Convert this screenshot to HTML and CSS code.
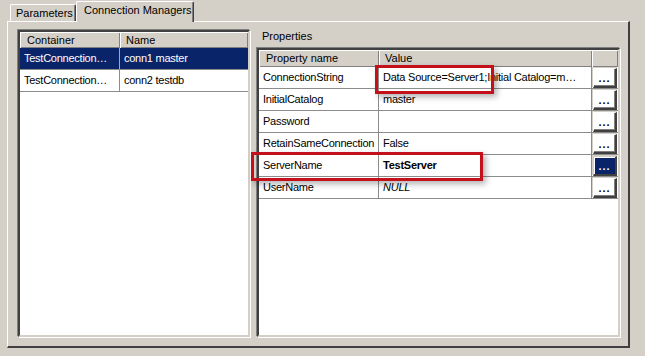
FILE: index.html
```html
<!DOCTYPE html>
<html>
<head>
<meta charset="utf-8">
<link rel="stylesheet" href="styles.css">
</head>
<body>
<div class="tabs">
  <div class="tab">Parameters</div>
  <div class="tab active">Connection Managers</div>
</div>
<div class="panel">
  <div class="list left">
    <div class="hdr">
      <div class="hc lc1">Container</div>
      <div class="hc lc2">Name</div>
    </div>
    <div class="row sel">
      <div class="cell lc1">TestConnection…</div>
      <div class="cell lc2">conn1 master</div>
    </div>
    <div class="row">
      <div class="cell lc1">TestConnection…</div>
      <div class="cell lc2">conn2 testdb</div>
    </div>
  </div>
  <div class="right">
    <div class="label">Properties</div>
    <div class="list grid">
      <div class="hdr">
        <div class="hc gc1">Property name</div>
        <div class="hc gc2">Value</div>
        <div class="hc gc3"></div>
      </div>
      <div class="row">
        <div class="cell gc1">ConnectionString</div>
        <div class="cell gc2">Data Source=Server1;Initial Catalog=m…</div>
        <div class="bcell"><div class="btn">...</div></div>
      </div>
      <div class="row">
        <div class="cell gc1">InitialCatalog</div>
        <div class="cell gc2">master</div>
        <div class="bcell"><div class="btn">...</div></div>
      </div>
      <div class="row">
        <div class="cell gc1">Password</div>
        <div class="cell gc2"></div>
        <div class="bcell"><div class="btn">...</div></div>
      </div>
      <div class="row">
        <div class="cell gc1">RetainSameConnection</div>
        <div class="cell gc2">False</div>
        <div class="bcell"><div class="btn">...</div></div>
      </div>
      <div class="row">
        <div class="cell gc1">ServerName</div>
        <div class="cell gc2 bold">TestServer</div>
        <div class="bcell"><div class="btn on">...</div></div>
      </div>
      <div class="row">
        <div class="cell gc1">UserName</div>
        <div class="cell gc2 ital">NULL</div>
        <div class="bcell"><div class="btn">...</div></div>
      </div>
    </div>
  </div>
</div>
<div class="hl hl1"></div>
<div class="hl hl2"></div>
</body>
</html>
```

FILE: styles.css
```css
html, body {
  margin: 0;
  padding: 0;
  background: #d4d0c8;
  width: 645px;
  height: 356px;
  overflow: hidden;
  font-family: "Liberation Sans", Arial, sans-serif;
  font-size: 11px;
  color: #000;
}

.tabs {
  display: flex;
  align-items: flex-end;
  height: 21px;
  padding-left: 10px;
  position: relative;
  z-index: 2;
}

.tab {
  box-sizing: border-box;
  height: 17px;
  width: 66px;
  border-top: 1px solid #fff;
  border-left: 1px solid #fff;
  border-right: 1px solid #404040;
  box-shadow: inset -1px 0 0 #808080;
  border-radius: 2px 2px 0 0;
  padding-left: 5px;
  line-height: 16px;
  white-space: nowrap;
  overflow: hidden;
}

.tab.active {
  height: 21px;
  width: 118px;
  margin-bottom: -1px;
  background: #d4d0c8;
  padding-left: 7px;
  line-height: 17px;
}

.panel {
  box-sizing: border-box;
  margin-left: 7px;
  width: 623px;
  height: 327px;
  border-top: 1px solid #fff;
  border-left: 1px solid #fff;
  border-right: 2px solid #404040;
  border-bottom: 2px solid #404040;
  padding: 8px 8px 9px 10px;
  display: flex;
  gap: 7px;
}

.list {
  box-sizing: border-box;
  background: #fff;
  border-top: 2px solid #404040;
  border-left: 2px solid #404040;
  border-right: 2px solid #d4d0c8;
  border-bottom: 2px solid #d4d0c8;
  box-shadow: 1px 1px 0 #fff, -1px -1px 0 #808080;
}

.left {
  width: 232px;
  height: 307px;
}

.right {
  width: 363px;
  display: flex;
  flex-direction: column;
}

.label {
  height: 18px;
  padding-left: 5px;
  line-height: 12px;
}

.grid {
  height: 289px;
}

.hdr {
  display: flex;
  height: 16px;
  background: #d4d0c8;
}

.grid .hdr {
  height: 17px;
}

.hc {
  box-sizing: border-box;
  height: 100%;
  padding-left: 6px;
  line-height: 16px;
  box-shadow: inset 1px 1px 0 #fff, inset -1px -1px 0 #808080;
  white-space: nowrap;
}

.row {
  display: flex;
  height: 22px;
  box-sizing: border-box;
  border-bottom: 1px solid #8c8c8c;
}

.cell {
  box-sizing: border-box;
  height: 100%;
  line-height: 21px;
  padding-left: 4px;
  white-space: nowrap;
  overflow: hidden;
  border-right: 1px solid #8c8c8c;
  letter-spacing: -0.25px;
}

.lc1 { width: 100px; }
.lc2 { width: 128px; border-right: none; }

.left .hc.lc1 { padding-left: 7px; }

.sel {
  background: #0a246a;
  color: #fff;
}

.sel .cell {
  border-right-color: #a6a6c0;
}

.gc1 { width: 120px; }
.gc2 { width: 213px; }
.gc3 { width: 26px; }

.grid .hc.gc1 { padding-left: 7px; }

.bold { font-weight: bold; }
.ital { font-style: italic; }

.bcell {
  width: 25px;
  height: 100%;
  box-sizing: border-box;
  padding: 1px 0 0 1px;
  border-right: 1px solid #d4d0c8;
}

.btn {
  box-sizing: border-box;
  width: 24px;
  height: 20px;
  background: #fff;
  border-top: 1px solid #fff;
  border-left: 1px solid #fff;
  border-right: 2px solid #404040;
  border-bottom: 2px solid #404040;
  box-shadow: inset -1px -1px 0 #808080, -1px -1px 0 #d4d0c8;
  text-align: center;
  font-weight: bold;
  font-size: 11px;
  line-height: 18px;
  letter-spacing: 1px;
}

.btn.on {
  background: #0a246a;
  color: #fff;
  border-top-color: #d4d0c8;
  border-left-color: #d4d0c8;
  box-shadow: inset 1px 1px 0 #fff, -1px -1px 0 #d4d0c8;
}

.hl {
  position: absolute;
  box-sizing: border-box;
  border: 3px solid #c4101a;
  box-shadow: 3px 3px 6px rgba(0, 0, 0, 0.3);
}

.hl1 {
  left: 375px;
  top: 65px;
  width: 119px;
  height: 29px;
}

.hl2 {
  left: 251px;
  top: 152px;
  width: 232px;
  height: 29px;
}
```
